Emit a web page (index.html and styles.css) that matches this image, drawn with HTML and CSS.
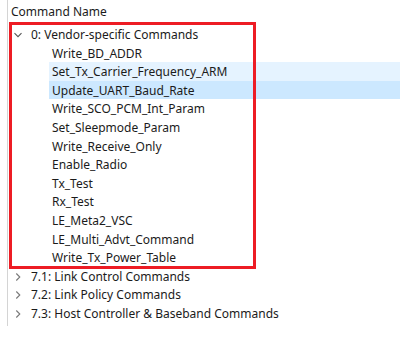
FILE: index.html
```html
<!DOCTYPE html>
<html>
<head>
  <title>Command Name</title>
  <meta charset="utf-8">
  <link rel="stylesheet" href="styles.css">
</head>
<body>
  <div class="panel">
    <div class="header">Command Name</div>
    <ul class="tree">
      <li class="group">
        <svg class="chev" width="10" height="10" viewBox="0 0 10 10"><path d="M1.5 3.2 L5 6.7 L8.5 3.2" fill="none" stroke="#555" stroke-width="1.1"/></svg>
        <span>0: Vendor-specific Commands</span>
      </li>
      <li class="item">Write_BD_ADDR</li>
      <li class="item hover">Set_Tx_Carrier_Frequency_ARM</li>
      <li class="item selected">Update_UART_Baud_Rate</li>
      <li class="item">Write_SCO_PCM_Int_Param</li>
      <li class="item">Set_Sleepmode_Param</li>
      <li class="item">Write_Receive_Only</li>
      <li class="item">Enable_Radio</li>
      <li class="item">Tx_Test</li>
      <li class="item">Rx_Test</li>
      <li class="item">LE_Meta2_VSC</li>
      <li class="item">LE_Multi_Advt_Command</li>
      <li class="item">Write_Tx_Power_Table</li>
      <li class="group">
        <svg class="chev" width="10" height="10" viewBox="0 0 10 10"><path d="M3.3 1.5 L6.8 5 L3.3 8.5" fill="none" stroke="#777" stroke-width="1.1"/></svg>
        <span>7.1: Link Control Commands</span>
      </li>
      <li class="group">
        <svg class="chev" width="10" height="10" viewBox="0 0 10 10"><path d="M3.3 1.5 L6.8 5 L3.3 8.5" fill="none" stroke="#777" stroke-width="1.1"/></svg>
        <span>7.2: Link Policy Commands</span>
      </li>
      <li class="group">
        <svg class="chev" width="10" height="10" viewBox="0 0 10 10"><path d="M3.3 1.5 L6.8 5 L3.3 8.5" fill="none" stroke="#777" stroke-width="1.1"/></svg>
        <span>7.3: Host Controller &amp; Baseband Commands</span>
      </li>
    </ul>
    <!-- annotation box -->
    <div class="mark"></div>
  </div>
</body>
</html>
```

FILE: styles.css
```css
html, body {
  margin: 0;
  background: #fff;
}
body {
  width: 400px;
  height: 337px;
  overflow: hidden;
  font-family: "Noto Sans", "Open Sans", sans-serif;
  font-size: 12px;
  color: #1b1b1b;
}
.panel {
  position: relative;
  margin-left: 7px;
  height: 326px;
  border-left: 1px solid #d4d4d4;
}
.header {
  height: 25px;
  line-height: 24px;
  padding-left: 3px;
}
.tree {
  margin: 0;
  padding: 0;
  list-style: none;
}
.tree li {
  height: 17.6px;
  padding-top: 1px;
  line-height: 17.6px;
  white-space: nowrap;
}
.group {
  display: flex;
  align-items: center;
  padding-left: 5px;
}
.chev {
  margin-right: 8px;
  flex: none;
}
.item {
  margin-left: 41px;
  padding-left: 3px;
}
.hover {
  background: #e5f3ff;
}
.selected {
  background: #cce8ff;
}
.mark {
  position: absolute;
  left: 1px;
  top: 22px;
  width: 241px;
  height: 241px;
  border: 3px solid #ed1c24;
}
```
